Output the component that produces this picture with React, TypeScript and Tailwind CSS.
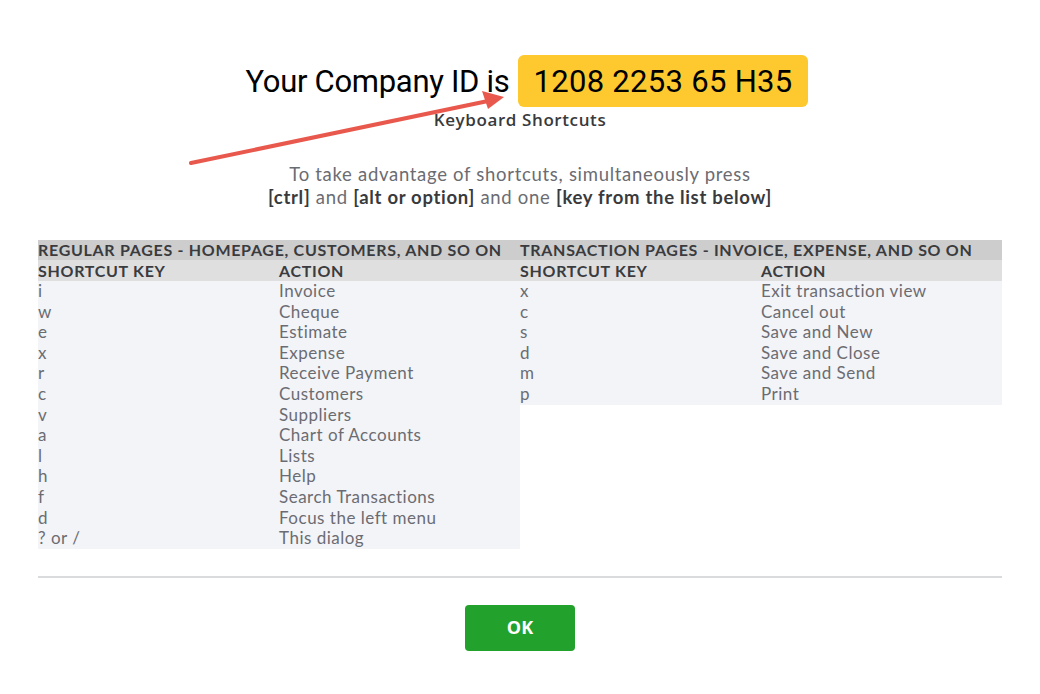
import React from "react";

const regular: [string, string][] = [
  ["i", "Invoice"],
  ["w", "Cheque"],
  ["e", "Estimate"],
  ["x", "Expense"],
  ["r", "Receive Payment"],
  ["c", "Customers"],
  ["v", "Suppliers"],
  ["a", "Chart of Accounts"],
  ["l", "Lists"],
  ["h", "Help"],
  ["f", "Search Transactions"],
  ["d", "Focus the left menu"],
  ["? or /", "This dialog"],
];

const transaction: [string, string][] = [
  ["x", "Exit transaction view"],
  ["c", "Cancel out"],
  ["s", "Save and New"],
  ["d", "Save and Close"],
  ["m", "Save and Send"],
  ["p", "Print"],
];

function ShortcutTable({ title, rows }: { title: string; rows: [string, string][] }) {
  return (
    <div className="flex flex-col font-['Lato',sans-serif]">
      <div className="h-[20px] bg-[#cdcdcd] text-[16px] font-bold leading-[20px] tracking-[0.7px] text-[#3a3b3e] whitespace-nowrap">
        {title}
      </div>
      <div className="grid h-[21px] grid-cols-2 bg-[#dfdfdf] text-[16px] font-bold leading-[21px] tracking-[0.7px] text-[#3a3b3e]">
        <div>SHORTCUT KEY</div>
        <div>ACTION</div>
      </div>
      {rows.map(([k, a], i) => (
        <div
          key={i}
          className="grid h-[20.6px] grid-cols-2 bg-[#f3f4f8] text-[17px] leading-[20.6px] tracking-[0.5px] text-[#6b6c72]"
        >
          <div>{k}</div>
          <div>{a}</div>
        </div>
      ))}
    </div>
  );
}

export default function App() {
  return (
    <div className="relative h-[694px] w-[1040px] overflow-hidden bg-white font-['Open_Sans','Noto_Sans',sans-serif]">
      <div className="flex flex-col px-[38px] pt-[55px]">
        <div className="flex items-center justify-center pl-[13px] font-['Roboto',sans-serif]">
          <span className="mr-[9px] text-[31px] leading-none tracking-[-0.3px] text-black">Your Company ID is</span>
          <span className="flex h-[52px] items-center rounded-[6px] bg-[#fdc92f] px-[15px] text-[31px] leading-none tracking-[0.3px] text-black">
            1208 2253 65 H35
          </span>
        </div>
        <div className="mt-[3px] text-center text-[17px] font-semibold leading-[20px] tracking-[0.6px] text-[#393a3d]">
          Keyboard Shortcuts
        </div>
        <div className="mt-[33px] text-center font-['Lato',sans-serif] text-[18.5px] leading-[23px] tracking-[0.7px] text-[#6b6c72]">
          <div>To take advantage of shortcuts, simultaneously press</div>
          <div>
            <span className="font-bold text-[#393a3d]">[ctrl]</span> and{" "}
            <span className="font-bold text-[#393a3d]">[alt or option]</span> and one{" "}
            <span className="font-bold text-[#393a3d]">[key from the list below]</span>
          </div>
        </div>
        <div className="mt-[31px] grid grid-cols-2 items-start">
          <ShortcutTable title="REGULAR PAGES - HOMEPAGE, CUSTOMERS, AND SO ON" rows={regular} />
          <ShortcutTable title="TRANSACTION PAGES - INVOICE, EXPENSE, AND SO ON" rows={transaction} />
        </div>
        <div className="mt-[27px] h-[2px] bg-[#dadbdd]" />
        <div className="mt-[27px] flex justify-center">
          <button className="h-[46px] w-[110px] rounded-[4px] bg-[#22a12c] text-[18px] font-bold text-white">
            OK
          </button>
        </div>
      </div>
      <svg className="pointer-events-none absolute left-0 top-0" width="1040" height="694">
        <line x1="191" y1="163" x2="488" y2="101" stroke="#e9584c" strokeWidth="4" strokeLinecap="round" />
        <polygon points="504,97 482,91 488,109" fill="#e9584c" />
      </svg>
    </div>
  );
}
